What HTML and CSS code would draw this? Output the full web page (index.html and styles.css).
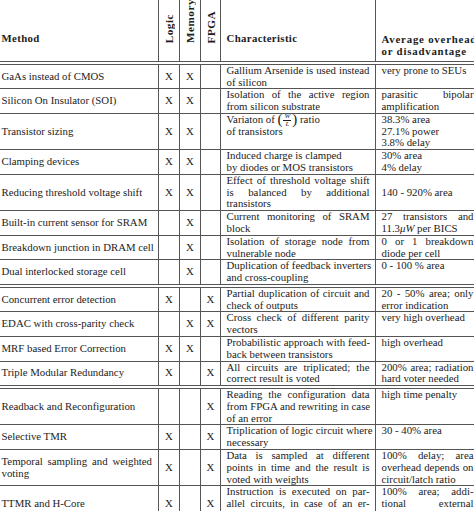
FILE: index.html
```html
<!DOCTYPE html>
<html>
<head>
<meta charset="utf-8">
<link rel="stylesheet" href="styles.css">
</head>
<body>
<table class="tbl">
<colgroup>
<col class="c-m"><col class="c-x1"><col class="c-x2"><col class="c-x3"><col class="c-c"><col class="c-o">
</colgroup>
<thead>
<tr class="hd">
<th class="h-m">Method</th>
<th class="h-r"><span class="rot">Logic</span></th>
<th class="h-r"><span class="rot">Memory</span></th>
<th class="h-r"><span class="rot">FPGA</span></th>
<th class="h-c">Characteristic</th>
<th class="h-o"><span class="l">Average overhead</span><span class="l">or disadvantage</span></th>
</tr>
</thead>
<tbody>
<tr>
<td class="m">GaAs instead of CMOS</td><td class="x">X</td><td class="x">X</td><td class="x"></td>
<td class="c"><span class="l j">Gallium Arsenide is used instead</span><span class="l">of silicon</span></td>
<td class="o"><span class="l">very prone to SEUs</span></td>
</tr>
<tr>
<td class="m">Silicon On Insulator (SOI)</td><td class="x">X</td><td class="x">X</td><td class="x"></td>
<td class="c"><span class="l j">Isolation of the active region</span><span class="l">from silicon substrate</span></td>
<td class="o"><span class="l j">parasitic bipolar</span><span class="l">amplification</span></td>
</tr>
<tr>
<td class="m">Transistor sizing</td><td class="x">X</td><td class="x">X</td><td class="x"></td>
<td class="c"><span class="l">Variaton of <span class="par">(</span><span class="frac"><span class="num">W</span><span class="den">L</span></span><span class="par">)</span> ratio</span><span class="l">of transistors</span></td>
<td class="o"><span class="l">38.3% area</span><span class="l">27.1% power</span><span class="l">3.8% delay</span></td>
</tr>
<tr>
<td class="m">Clamping devices</td><td class="x">X</td><td class="x">X</td><td class="x"></td>
<td class="c"><span class="l">Induced charge is clamped</span><span class="l">by diodes or MOS transistors</span></td>
<td class="o"><span class="l">30% area</span><span class="l">4% delay</span></td>
</tr>
<tr>
<td class="m">Reducing threshold voltage shift</td><td class="x">X</td><td class="x">X</td><td class="x"></td>
<td class="c"><span class="l j">Effect of threshold voltage shift</span><span class="l j">is balanced by additional</span><span class="l">transistors</span></td>
<td class="o mid"><span class="l">140 - 920% area</span></td>
</tr>
<tr>
<td class="m">Built-in current sensor for SRAM</td><td class="x"></td><td class="x">X</td><td class="x"></td>
<td class="c"><span class="l j">Current monitoring of SRAM</span><span class="l">block</span></td>
<td class="o"><span class="l j">27 transistors and</span><span class="l">11.3<i>μW</i> per BICS</span></td>
</tr>
<tr>
<td class="m">Breakdown junction in DRAM cell</td><td class="x"></td><td class="x">X</td><td class="x"></td>
<td class="c"><span class="l j">Isolation of storage node from</span><span class="l">vulnerable node</span></td>
<td class="o"><span class="l j">0 or 1 breakdown</span><span class="l">diode per cell</span></td>
</tr>
<tr class="dbl">
<td class="m">Dual interlocked storage cell</td><td class="x"></td><td class="x">X</td><td class="x"></td>
<td class="c"><span class="l j">Duplication of feedback inverters</span><span class="l">and cross-coupling</span></td>
<td class="o"><span class="l">0 - 100 % area</span></td>
</tr>
<tr>
<td class="m">Concurrent error detection</td><td class="x">X</td><td class="x"></td><td class="x">X</td>
<td class="c"><span class="l j">Partial duplication of circuit and</span><span class="l">check of outputs</span></td>
<td class="o"><span class="l j">20 - 50% area; only</span><span class="l">error indication</span></td>
</tr>
<tr>
<td class="m">EDAC with cross-parity check</td><td class="x"></td><td class="x">X</td><td class="x">X</td>
<td class="c"><span class="l j">Cross check of different parity</span><span class="l">vectors</span></td>
<td class="o"><span class="l">very high overhead</span></td>
</tr>
<tr>
<td class="m">MRF based Error Correction</td><td class="x">X</td><td class="x">X</td><td class="x"></td>
<td class="c"><span class="l j">Probabilistic approach with feed-</span><span class="l">back between transistors</span></td>
<td class="o"><span class="l">high overhead</span></td>
</tr>
<tr class="dbl">
<td class="m">Triple Modular Redundancy</td><td class="x">X</td><td class="x"></td><td class="x">X</td>
<td class="c"><span class="l j">All circuits are triplicated; the</span><span class="l">correct result is voted</span></td>
<td class="o"><span class="l j">200% area; radiation</span><span class="l">hard voter needed</span></td>
</tr>
<tr>
<td class="m">Readback and Reconfiguration</td><td class="x"></td><td class="x"></td><td class="x">X</td>
<td class="c"><span class="l j">Reading the configuration data</span><span class="l j">from FPGA and rewriting in case</span><span class="l">of an error</span></td>
<td class="o"><span class="l">high time penalty</span></td>
</tr>
<tr>
<td class="m">Selective TMR</td><td class="x">X</td><td class="x"></td><td class="x">X</td>
<td class="c"><span class="l j">Triplication of logic circuit where</span><span class="l">necessary</span></td>
<td class="o"><span class="l">30 - 40% area</span></td>
</tr>
<tr>
<td class="m"><span class="l j">Temporal sampling and weighted</span><span class="l">voting</span></td><td class="x">X</td><td class="x"></td><td class="x">X</td>
<td class="c"><span class="l j">Data is sampled at different</span><span class="l j">points in time and the result is</span><span class="l">voted with weights</span></td>
<td class="o"><span class="l j">100% delay; area</span><span class="l j">overhead depends on</span><span class="l">circuit/latch ratio</span></td>
</tr>
<tr>
<td class="m">TTMR and H-Core</td><td class="x">X</td><td class="x"></td><td class="x">X</td>
<td class="c"><span class="l j">Instruction is executed on par-</span><span class="l j">allel circuits, in case of an er-</span><span class="l">ror the instruction is repeated</span></td>
<td class="o"><span class="l j">100% area; addi-</span><span class="l j">tional external</span><span class="l">hardware</span></td>
</tr>
</tbody>
</table>
</body>
</html>
```

FILE: styles.css
```css
html, body {
  margin: 0;
  padding: 0;
  overflow: hidden;
  background: #ffffff;
}
body {
  width: 474px;
  height: 511px;
}
.tbl {
  border-collapse: collapse;
  table-layout: fixed;
  width: 485px;
  margin: -1px 0 0 -6px;
  font-family: "Liberation Serif", "Times New Roman", serif;
  font-size: 10.8px;
  line-height: 11.78px;
  color: #1c1c1c;
}
.c-m { width: 164px; }
.c-x1 { width: 21px; }
.c-x2 { width: 21px; }
.c-x3 { width: 20px; }
.c-c { width: 155px; }
.c-o { width: 104px; }

td, th {
  border: 1px solid #555;
  padding: 0;
}
th {
  font-weight: bold;
  letter-spacing: 0.35px;
  text-align: left;
  vertical-align: bottom;
  border-top: none;
  white-space: nowrap;
}
.hd th { border-bottom: 4px double #555; }
.h-m { padding: 0 6px 16px 6.5px; }
.h-r { text-align: center; padding: 0 0 15px; }
.h-c { padding: 0 5.5px 16px; }
.h-o { padding: 0 0 3px 5.5px; letter-spacing: 0.8px; }
.rot {
  display: inline-block;
  writing-mode: vertical-rl;
  transform: rotate(180deg);
  font-size: 11.2px;
  letter-spacing: 0.5px;
  line-height: 12px;
}

td.m { padding: 0 6px 0 6.5px; vertical-align: middle; white-space: nowrap; }
td.x { text-align: center; vertical-align: middle; }
td.c, td.o { padding: 0 5.5px; vertical-align: top; }
td.mid { vertical-align: middle; }
tr.dbl td { border-bottom: 4px double #555; }

.l { display: block; white-space: nowrap; }
.j { text-align: justify; text-align-last: justify; }

.par {
  font-size: 15px;
  line-height: 0;
  vertical-align: -1px;
}
.frac {
  display: inline-flex;
  flex-direction: column;
  align-items: center;
  vertical-align: middle;
  font-style: italic;
  font-size: 7px;
  line-height: 7px;
  margin: -4px 1px;
}
.num { border-bottom: 0.6px solid #1c1c1c; padding: 0 1px; }
.den { padding: 0 1px; }
```
